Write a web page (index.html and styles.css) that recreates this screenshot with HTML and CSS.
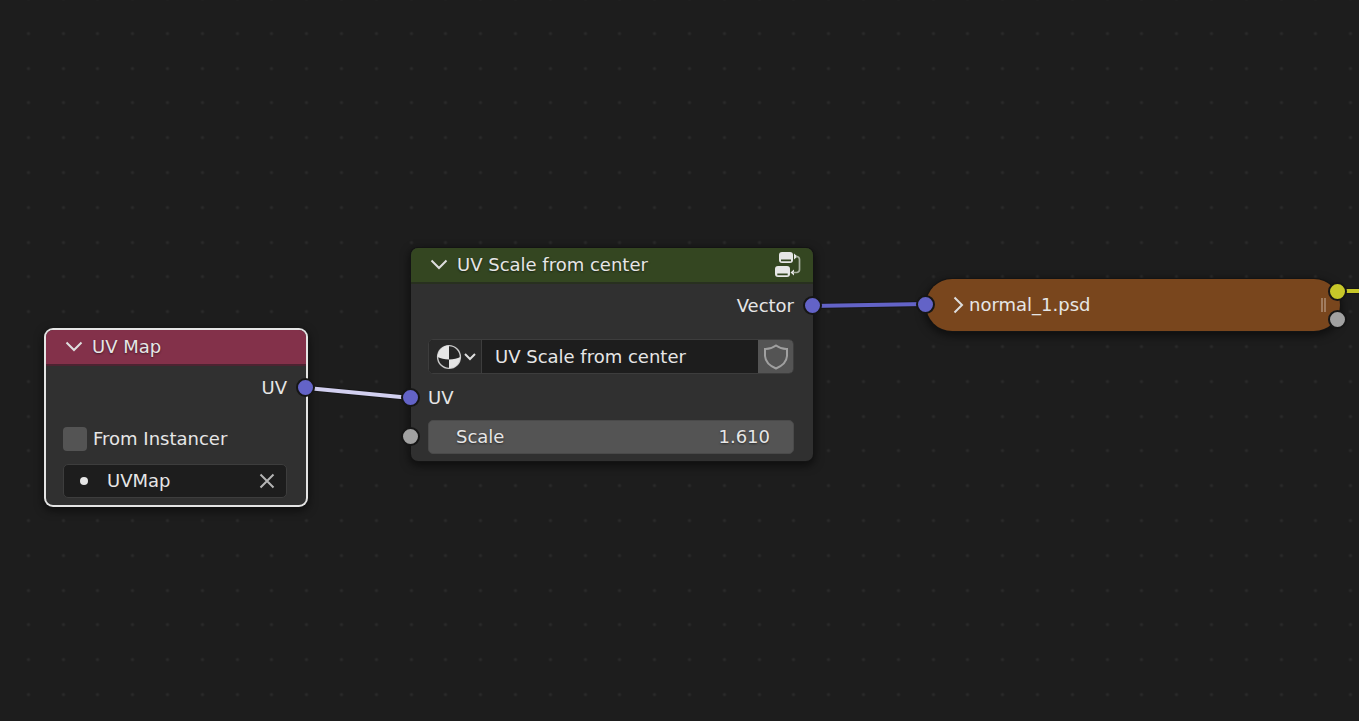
FILE: index.html
```html
<!DOCTYPE html>
<html lang="en">
<head>
    <meta charset="UTF-8">
    <meta name="viewport" content="width=device-width, initial-scale=1.0">
    <title>Shader Editor</title>
    <link rel="stylesheet" href="styles.css">
</head>
<body>
    <main class="canvas">
        <!-- dot grid and links -->
        <svg class="links" aria-hidden="true">
            <defs>
                <g id="dotRow" fill="#2a2a2a">
                    <circle cx="2" cy="2" r="1.6"/>
                    <circle cx="37" cy="2" r="1.6"/>
                    <circle cx="71" cy="2" r="1.6"/>
                    <circle cx="106" cy="2" r="1.6"/>
                    <circle cx="141" cy="2" r="1.6"/>
                </g>
                <pattern id="dots" x="26.5" y="31.5" width="174" height="174" patternUnits="userSpaceOnUse">
                    <use href="#dotRow"/>
                    <use href="#dotRow" y="35"/>
                    <use href="#dotRow" y="69"/>
                    <use href="#dotRow" y="104"/>
                    <use href="#dotRow" y="139"/>
                </pattern>
            </defs>
            <rect width="100%" height="100%" fill="url(#dots)"/>
            <g class="link-shadow">
                <path d="M307 388 L411 398"/>
                <path d="M812 306 L925 304"/>
                <path d="M1337 291 L2400 289"/>
            </g>
            <path class="link selected" d="M307 388 L411 398"/>
            <path class="link vector" d="M812 306 L925 304"/>
            <path class="link color" d="M1337 291 L2400 289"/>
        </svg>

        <section class="node uv-map">
            <header class="node-header">
                <button class="toggle" aria-label="Collapse">
                    <svg width="18" height="12" viewBox="0 0 18 12"><path d="M1.5 1.5 L9 9 L16.5 1.5"/></svg>
                </button>
                <span>UV Map</span>
            </header>
            <div class="node-body">
                <div class="row output">UV<i class="socket vector right"></i></div>
                <div class="row check">
                    <input type="checkbox" id="fromInstancer">
                    <label for="fromInstancer">From Instancer</label>
                </div>
                <div class="field map-field">
                    <i class="dot"></i>
                    <input type="text" value="UVMap" aria-label="UV map">
                    <button class="clear" aria-label="Clear">
                        <svg width="16" height="16" viewBox="0 0 16 16"><path d="M1.5 1.5 L14.5 14.5 M14.5 1.5 L1.5 14.5"/></svg>
                    </button>
                </div>
            </div>
        </section>

        <section class="node uv-scale">
            <header class="node-header">
                <button class="toggle" aria-label="Collapse">
                    <svg width="18" height="12" viewBox="0 0 18 12"><path d="M1.5 1.5 L9 9 L16.5 1.5"/></svg>
                </button>
                <span>UV Scale from center</span>
                <button class="group" aria-label="Edit group">
                    <svg width="26" height="26" viewBox="0 0 26 26">
                        <g fill="#e6e6e6">
                            <rect x="4" y="0" width="14" height="11" rx="3"/>
                            <rect x="0" y="14" width="15" height="11" rx="3"/>
                            <path d="M19 1.5 L22.5 4.5 L19 7.5 Z M19 17.5 L15.5 20.5 L19 23.5 Z"/>
                        </g>
                        <path d="M6 8.4 H16 M2.3 22.4 H12.7" stroke="#344621" stroke-width="1.8"/>
                        <path d="M21 4.5 H22 Q24.5 5 24.5 7.5 V17.5 Q24.5 20 22 20.5 H18" fill="none" stroke="#a9b1a1" stroke-width="1.7"/>
                    </svg>
                </button>
            </header>
            <div class="node-body">
                <div class="row output">Vector<i class="socket vector right"></i></div>
                <div class="field group-field">
                    <button class="browse" aria-label="Browse node groups">
                        <svg width="26" height="26" viewBox="0 0 26 26">
                            <circle cx="13" cy="13" r="11.4" fill="#262626" stroke="#c9c9c9" stroke-width="1.4"/>
                            <path d="M13 1.5 V15.5 Q6 15.3 1.7 13 A11.3 11.3 0 0 1 13 1.5 Z M13 15.5 Q20 15.3 24.3 13 A11.3 11.3 0 0 1 13 24.3 Z" fill="#e6e6e6"/>
                        </svg>
                        <svg width="14" height="10" viewBox="0 0 14 10"><path class="arrow" d="M2 2 L7 7 L12 2"/></svg>
                    </button>
                    <input type="text" value="UV Scale from center" aria-label="Node group">
                    <button class="shield" aria-label="Fake user">
                        <svg width="26" height="26" viewBox="0 0 26 26"><path d="M13 1.5 Q8 5.2 2 5 V12 Q2.5 20 13 24.5 Q23.5 20 24 12 V5 Q18 5.2 13 1.5 Z"/></svg>
                    </button>
                </div>
                <div class="row input">UV<i class="socket vector left"></i></div>
                <div class="row value-row">
                    <i class="socket value left"></i>
                    <div class="field scale-field">
                        <label for="scale">Scale</label>
                        <input type="text" id="scale" value="1.610">
                    </div>
                </div>
            </div>
        </section>

        <section class="node texture">
            <button class="toggle" aria-label="Expand">
                <svg width="12" height="18" viewBox="0 0 12 18"><path d="M1.5 1.5 L9 9 L1.5 16.5"/></svg>
            </button>
            <span>normal_1.psd</span>
            <i class="grip"></i>
            <i class="socket vector left"></i>
            <i class="socket color right"></i>
            <i class="socket value right"></i>
        </section>
    </main>
</body>
</html>
```
FILE: styles.css
```css
* {
    box-sizing: border-box;
}
body {
    margin: 0;
    background: #1d1d1d;
    color: #e6e6e6;
    font-family: "DejaVu Sans", sans-serif;
    font-size: 18px;
    line-height: 30px;
}
button {
    display: flex;
    align-items: center;
    padding: 0;
    border: none;
    background: none;
}
input[type="text"] {
    flex: 1;
    min-width: 0;
    padding: 0;
    border: none;
    outline: none;
    background: none;
    color: #e6e6e6;
    font: inherit;
}
.canvas {
    position: relative;
    height: 100vh;
    overflow: hidden;
}

/* links */
.links {
    position: absolute;
    inset: 0;
    width: 100%;
    height: 100%;
}
.link {
    stroke-width: 4px;
}
.link-shadow path {
    stroke: #171717;
    stroke-width: 6px;
}
.link.selected {
    stroke: #d2d0f0;
}
.link.vector {
    stroke: #6363c7;
}
.link.color {
    stroke: #c7c729;
}

/* nodes */
.node {
    position: absolute;
    border-radius: 7px;
    background: #303030;
    box-shadow: 0 0 0 1px #141414, 0 3px 8px 2px rgba(0, 0, 0, 0.5);
}
.uv-map {
    left: 46px;
    top: 330px;
    width: 260px;
    box-shadow: 0 0 0 2px #e4e4e4, 0 3px 8px 3px rgba(0, 0, 0, 0.5);
}
.uv-scale {
    left: 411px;
    top: 248px;
    width: 402px;
}
.node-header {
    display: flex;
    align-items: center;
    gap: 9px;
    height: 36px;
    padding: 0 12px 0 19px;
    border-radius: 7px 7px 0 0;
    border-bottom: 2px solid #28301f;
    background: #344621;
    text-shadow: 0 1px 2px rgba(0, 0, 0, 0.5);
}
.uv-map .node-header {
    border-bottom-color: #4d2331;
    background: #83314a;
}
.toggle path {
    fill: none;
    stroke: #dedede;
    stroke-width: 2px;
}
.group {
    margin-left: auto;
}
.node-body {
    padding: 7px 19px 7px 17px;
}
.row {
    position: relative;
    height: 30px;
}
.output {
    text-align: right;
}
.check {
    display: flex;
    align-items: center;
    gap: 6px;
    height: 24px;
    margin-top: 24px;
}
.check input {
    appearance: none;
    width: 24px;
    height: 24px;
    margin: 0;
    border-radius: 4px;
    background: #545454;
}
.field {
    display: flex;
    align-items: center;
    height: 34px;
    border: 1px solid #3d3d3d;
    border-radius: 5px;
    background: #1d1d1d;
}
.map-field {
    margin-top: 13px;
    padding: 0 11px 0 16px;
    gap: 19px;
}
.dot {
    width: 8px;
    height: 8px;
    border-radius: 50%;
    background: #e6e6e6;
}
.clear path {
    fill: none;
    stroke: #b4b4b4;
    stroke-width: 2px;
}
.group-field {
    align-items: stretch;
    height: 35px;
    margin: 18px 0 9px;
}
.browse {
    gap: 1px;
    width: 53px;
    padding-left: 7px;
    border-right: 1px solid #3d3d3d;
    border-radius: 4px 0 0 4px;
    background: #282828;
}
.arrow {
    fill: none;
    stroke: #dedede;
    stroke-width: 2px;
}
.group-field input[type="text"] {
    padding-left: 13px;
}
.shield {
    justify-content: center;
    width: 35px;
    border-radius: 0 4px 4px 0;
    background: #545454;
}
.shield path {
    fill: none;
    stroke: #a0a0a0;
    stroke-width: 2px;
}
.value-row {
    height: 34px;
    margin-top: 7px;
}
.scale-field {
    padding: 0 23px 0 27px;
    border-color: #4a4a4a;
    background: #545454;
    text-shadow: 0 1px 2px rgba(0, 0, 0, 0.5);
}
.scale-field input[type="text"] {
    text-align: right;
    text-shadow: inherit;
}

/* collapsed node */
.texture {
    left: 926px;
    top: 279px;
    display: flex;
    align-items: center;
    gap: 4px;
    width: 414px;
    height: 52px;
    padding: 0 14px 0 27px;
    border-radius: 26px;
    background: #79461d;
}
.grip {
    width: 5px;
    height: 14px;
    margin-left: auto;
    border: solid #a07b5e;
    border-width: 0 2px;
}

/* sockets */
.socket {
    position: absolute;
    top: 50%;
    width: 19px;
    height: 19px;
    margin-top: -10px;
    border: 2px solid #161616;
    border-radius: 50%;
}
.socket.vector {
    background: #6363c7;
}
.socket.value {
    background: #a1a1a1;
}
.socket.color {
    background: #c7c729;
}
.socket.left {
    left: -27px;
}
.socket.right {
    right: -28px;
}
.texture .socket.left {
    left: -10px;
}
.texture .socket.right {
    right: -7px;
}
.texture .socket.color {
    top: 13px;
}
.texture .socket.value {
    top: 41px;
}
```
